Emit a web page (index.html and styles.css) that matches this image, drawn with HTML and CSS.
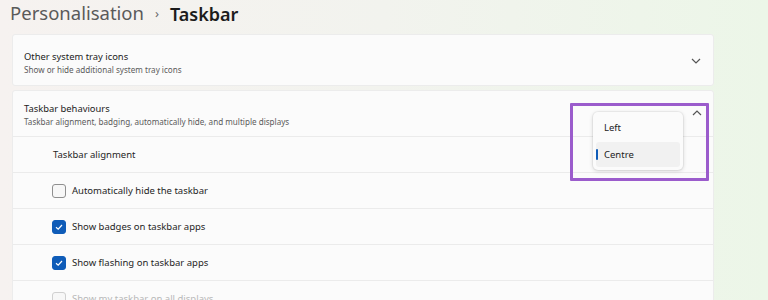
FILE: index.html
```html
<!DOCTYPE html>
<html>
<head>
<meta charset="utf-8">
<link rel="stylesheet" href="styles.css">
</head>
<body>
<div class="page">
  <h1 class="crumbs"><span class="parent">Personalisation</span><span class="sep">›</span><span class="current">Taskbar</span></h1>
  <div class="cards">
    <div class="card head">
      <div class="texts">
        <div class="title">Other system tray icons</div>
        <div class="sub">Show or hide additional system tray icons</div>
      </div>
      <svg class="chev" width="10" height="6" viewBox="0 0 10 6"><path d="M1 1 L5 5 L9 1" fill="none" stroke="#555" stroke-width="1.2"/></svg>
    </div>
    <div class="card group">
      <div class="head row-head">
        <div class="texts">
          <div class="title">Taskbar behaviours</div>
          <div class="sub">Taskbar alignment, badging, automatically hide, and multiple displays</div>
        </div>
        <svg class="chev up" width="10" height="6" viewBox="0 0 10 6"><path d="M1 5 L5 1 L9 5" fill="none" stroke="#555" stroke-width="1.2"/></svg>
      </div>
      <div class="row"><span class="label plain">Taskbar alignment</span></div>
      <div class="row"><span class="box"></span><span class="label">Automatically hide the taskbar</span></div>
      <div class="row"><span class="box on"><svg width="10" height="10" viewBox="0 0 10 10"><path d="M2 5.2 L4.2 7.2 L8 3" fill="none" stroke="#fff" stroke-width="1.2"/></svg></span><span class="label">Show badges on taskbar apps</span></div>
      <div class="row"><span class="box on"><svg width="10" height="10" viewBox="0 0 10 10"><path d="M2 5.2 L4.2 7.2 L8 3" fill="none" stroke="#fff" stroke-width="1.2"/></svg></span><span class="label">Show flashing on taskbar apps</span></div>
      <div class="row disabled"><span class="box"></span><span class="label">Show my taskbar on all displays</span></div>
    </div>
  </div>
  <div class="highlight"></div>
  <div class="menu">
    <div class="item">Left</div>
    <div class="item sel"><span class="bar"></span>Centre</div>
  </div>
</div>
</body>
</html>
```
FILE: styles.css
```css
html, body { margin: 0; padding: 0; }
body {
  width: 768px; height: 300px; overflow: hidden;
  background: linear-gradient(to right, #f6f2f0 0%, #f2f3ee 50%, #ecf6e8 100%);
  font-family: "Noto Sans", "Open Sans", sans-serif;
  color: #1f1f1f;
}
.page { position: relative; height: 300px; }
.crumbs {
  margin: 0; padding: 0 0 0 10px; height: 27px;
  display: flex; align-items: center;
  font-size: 18.5px; font-weight: 400; line-height: 1;
}
.parent { color: #5a5a5a; }
.sep { color: #6a6a6a; font-size: 13px; margin: 0 11px 0 11px; }
.current { color: #1c1c1c; font-weight: 600; font-size: 18px; }
.cards {
  margin: 7px 54px 0 12px;
  display: flex; flex-direction: column; gap: 4px;
}
.card {
  background: #fbfbfb;
  border: 1px solid #ececec;
  border-radius: 3px;
}
.head {
  display: flex; align-items: center; justify-content: space-between;
  height: 50px; padding: 0 12px 0 11px; box-sizing: border-box;
}
.card.head { height: 52px; padding-top: 5px; }
.card.head .chev { margin-top: -4px; }
.row-head { height: 46px; border-bottom: 1px solid #ebebeb; padding-top: 2px; padding-right: 11px; }
.title { font-size: 9.4px; color: #222; line-height: 14px; }
.sub { font-size: 8.1px; color: #5c5c5c; line-height: 12px; }
.chev { display: block; }
.row-head .chev.up { margin-top: -3px; position: relative; z-index: 3; }
.row {
  display: flex; align-items: center; gap: 6px;
  height: 35px; padding-left: 39px;
  border-bottom: 1px solid #ebebeb;
  font-size: 9.5px; color: #252525;
}
.label.plain { padding-left: 1px; }
.box {
  width: 12px; height: 12px; border: 1px solid #8f8f8f; border-radius: 3px;
  background: #f7f7f7; box-sizing: content-box;
  display: flex; align-items: center; justify-content: center;
}
.box.on { background: #0f5cb8; border-color: #0f5cb8; }
.disabled { color: #b8b8b8; border-bottom: none; }
.disabled .box { border-color: #d0d0d0; }
.highlight {
  position: absolute; left: 570px; top: 103px; width: 133px; height: 72px;
  border: 3px solid #9b5ccc; border-radius: 1px;
}
.menu {
  position: absolute; left: 593px; top: 112px; width: 90px; height: 58px;
  background: #fbfbfb; border-radius: 5px;
  box-shadow: 0 1px 4px rgba(0,0,0,0.16), 0 0 0 1px rgba(0,0,0,0.04);
  padding: 3px; box-sizing: border-box;
  display: flex; flex-direction: column; gap: 2px;
  font-size: 9.5px; color: #222;
}
.item { height: 25px; display: flex; align-items: center; padding-left: 8px; position: relative; border-radius: 3px; }
.item.sel { background: #f1f1f1; }
.bar { position: absolute; left: 0; top: 7px; width: 2px; height: 11px; background: #0f5cb8; border-radius: 1px; }
```
